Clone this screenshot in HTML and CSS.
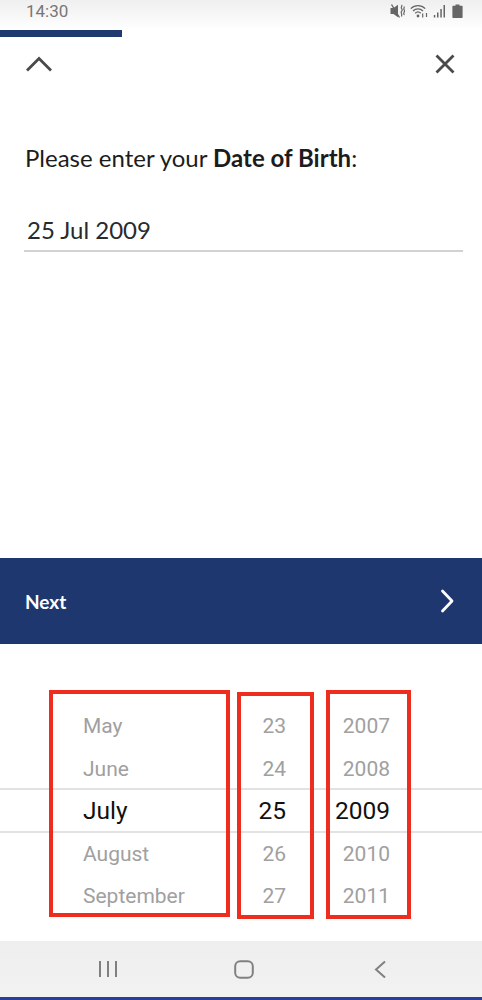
FILE: index.html
```html
<!DOCTYPE html>
<html lang="en">
<head>
<meta charset="UTF-8" />
<meta name="viewport" content="width=device-width, initial-scale=1" />
<title>Date of Birth</title>
<link rel="stylesheet" href="styles.css">
</head>
<body>
<div class="phone">

  <!-- Status bar -->
  <div class="status-bar">
    <span class="status-time">14:30</span>
    <div class="status-icons">
      <svg width="15" height="14" viewBox="0 0 15 14">
        <path d="M0.500 4h3L8 0.800v12.400L3.500 10H0.500z" fill="#666"/>
        <path d="M1.500 0.500l8 13" stroke="#666" stroke-width="1.400"/>
        <path d="M11.500 1c1.200 1.200-1 2.300 0 3.400s1.200 1.600 0 3 1 2.200 0 5.100M14 2.500c.7 1-.7 2 0 3s.7 1.800 0 3 .3 1.600 0 2.500" fill="none" stroke="#666" stroke-width="1.200"/>
      </svg>
      <svg class="wifi" width="18" height="14" viewBox="0 0 18 14">
        <path d="M0.800 4.600C4.800 .6 11.200 .6 15.200 4.600M3 7c2.800-2.800 7.200-2.800 10 0M5.200 9.200c1.600-1.500 4-1.500 5.600 0" fill="none" stroke="#666" stroke-width="1.300"/>
        <circle cx="8" cy="12" r="1.400" fill="#666"/>
        <path d="M12.700 9.500v4M16.500 9v4" stroke="#666" stroke-width="1.200"/>
      </svg>
      <svg class="signal" width="13" height="14" viewBox="0 0 13 14">
        <path d="M0.800 11h1.500v2.500H0.800zM4 8.500h1.500v5H4zM7.300 5h1.500v8.500H7.300zM10.500 1H12v12.500h-1.500z" fill="#666"/>
      </svg>
      <svg class="battery" width="11" height="14" viewBox="0 0 11 14">
        <path d="M3.500 0.500h4v1.200H10a.6.6 0 0 1 .6.6v11a.6.6 0 0 1-.6.6H1a.6.6 0 0 1-.6-.6v-11a.6.6 0 0 1 .6-.6h2.500z" fill="#666"/>
      </svg>
    </div>
  </div>

  <div class="progress"></div>

  <!-- Top buttons -->
  <div class="top-row">
    <svg width="26" height="16" viewBox="0 0 26 16">
      <path d="M1 14.500L13 2.500l12 12" fill="none" stroke="#4a4a4a" stroke-width="2.800"/>
    </svg>
    <svg width="20" height="20" viewBox="0 0 20 20">
      <path d="M1.500 1.500l17 17M18.500 1.500l-17 17" fill="none" stroke="#4a4a4a" stroke-width="2.800"/>
    </svg>
  </div>

  <!-- Question -->
  <div class="form">
    <p class="question">Please enter your <b>Date of Birth</b>:</p>
    <div class="date-field">25 Jul 2009</div>
  </div>

  <div class="next-btn">
    <span>Next</span>
    <svg width="14" height="24" viewBox="0 0 14 24">
      <path d="M2.500 2L12 12 2.500 22" fill="none" stroke="#fff" stroke-width="2.800" stroke-linecap="round" stroke-linejoin="round"/>
    </svg>
  </div>

  <!-- Date picker -->
  <div class="picker">
    <div class="picker-band"></div>
    <div class="wheel wheel-month">
      <div class="wheel-item">May</div>
      <div class="wheel-item">June</div>
      <div class="wheel-item selected">July</div>
      <div class="wheel-item">August</div>
      <div class="wheel-item">September</div>
    </div>
    <div class="wheel wheel-day">
      <div class="wheel-item">23</div>
      <div class="wheel-item">24</div>
      <div class="wheel-item selected">25</div>
      <div class="wheel-item">26</div>
      <div class="wheel-item">27</div>
    </div>
    <div class="wheel wheel-year">
      <div class="wheel-item">2007</div>
      <div class="wheel-item">2008</div>
      <div class="wheel-item selected">2009</div>
      <div class="wheel-item">2010</div>
      <div class="wheel-item">2011</div>
    </div>
  </div>

  <!-- Android nav bar -->
  <div class="nav-bar">
    <svg width="18" height="18" viewBox="0 0 18 18">
      <path d="M1 1v16M9 1v16M17 1v16" fill="none" stroke="#808080" stroke-width="2"/>
    </svg>
    <svg class="nav-home" width="20" height="19" viewBox="0 0 20 19">
      <rect x="1.200" y="1.200" width="17.600" height="16.600" rx="5" fill="none" stroke="#808080" stroke-width="2"/>
    </svg>
    <svg class="nav-back" width="12" height="19" viewBox="0 0 12 19">
      <path d="M11 1.500L2 9.500l9 8" fill="none" stroke="#808080" stroke-width="2"/>
    </svg>
  </div>

</div>
</body>
</html>
```

FILE: styles.css
```css
html, body {
  margin: 0;
  padding: 0;
  height: 100%;
  background-color: #fff;
}
.phone {
  display: flex;
  flex-direction: column;
  height: 1000px;
  width: 482px;
  overflow: hidden;
  font-family: Lato, sans-serif;
}

/* status bar */
.status-bar {
  display: flex;
  justify-content: space-between;
  align-items: center;
  height: 22px;
  padding: 0 19px 8px 26px;
  background: linear-gradient(#efefef, #fff);
}
.status-time {
  font-family: Roboto, sans-serif;
  font-size: 17px;
  color: #777;
}
.status-icons {
  display: flex;
  align-items: center;
}
.wifi {
  margin-left: 5px;
}
.signal {
  margin-left: 5px;
}
.battery {
  margin-left: 6px;
}
.progress {
  width: 122px;
  height: 7px;
  background-color: #1e3a70;
}

.top-row {
  display: flex;
  justify-content: space-between;
  align-items: center;
  height: 20px;
  margin-top: 17px;
  padding: 0 27px 0 26px;
}

.form {
  flex: 1;
  padding: 0 19px 0 24px;
}
.question {
  margin: 0;
  padding: 68px 0 0 1px;
  font-size: 24px;
  line-height: 32px;
  color: #1c1c1c;
}
.question b {
  font-weight: 700;
}
.date-field {
  margin-top: 40px;
  padding: 0 0 4px 3px;
  font-size: 24px;
  line-height: 32px;
  color: #2a2a2a;
  border-bottom: 2px solid #d2d2d2;
}

.next-btn {
  display: flex;
  justify-content: space-between;
  align-items: center;
  flex-shrink: 0;
  height: 86px;
  padding: 0 28px 0 25px;
  background-color: #1e386f;
  color: #fff;
  font-size: 19px;
  font-weight: 700;
}

/* date picker */
.picker {
  position: relative;
  display: flex;
  align-items: flex-start;
  flex-shrink: 0;
  height: 251px;
  padding: 46px 0 0 49px;
  font-family: Roboto, sans-serif;
}
.picker-band {
  position: absolute;
  left: 0;
  right: 0;
  top: 144px;
  height: 41px;
  border-top: 2px solid #e2e2e2;
  border-bottom: 2px solid #e2e2e2;
}
.wheel {
  position: relative;
  box-sizing: border-box;
  height: 227px;
  border: 4px solid #ee2d1f;
  padding-top: 11px;
}
.wheel-month {
  width: 181px;
  padding-left: 30px;
}
.wheel-day {
  width: 77px;
  margin: 2px 0 0 7px;
  padding-top: 9px;
  padding-right: 24px;
  text-align: right;
}
.wheel-year {
  width: 85px;
  height: 229px;
  margin-left: 12px;
  padding-right: 17px;
  text-align: right;
}
.wheel-item {
  height: 42.5px;
  line-height: 42.5px;
  font-size: 21px;
  color: #a0a0a0;
}
.wheel-item.selected {
  font-size: 24.5px;
  color: #111;
}

.nav-bar {
  display: flex;
  align-items: center;
  flex-shrink: 0;
  height: 56px;
  padding: 0 0 0 99px;
  background: linear-gradient(#eeeeee, #f2f2f2);
  border-bottom: 3px solid #2a3f9a;
}
.nav-home {
  margin-left: 117px;
}
.nav-back {
  margin-left: 120px;
}
```
